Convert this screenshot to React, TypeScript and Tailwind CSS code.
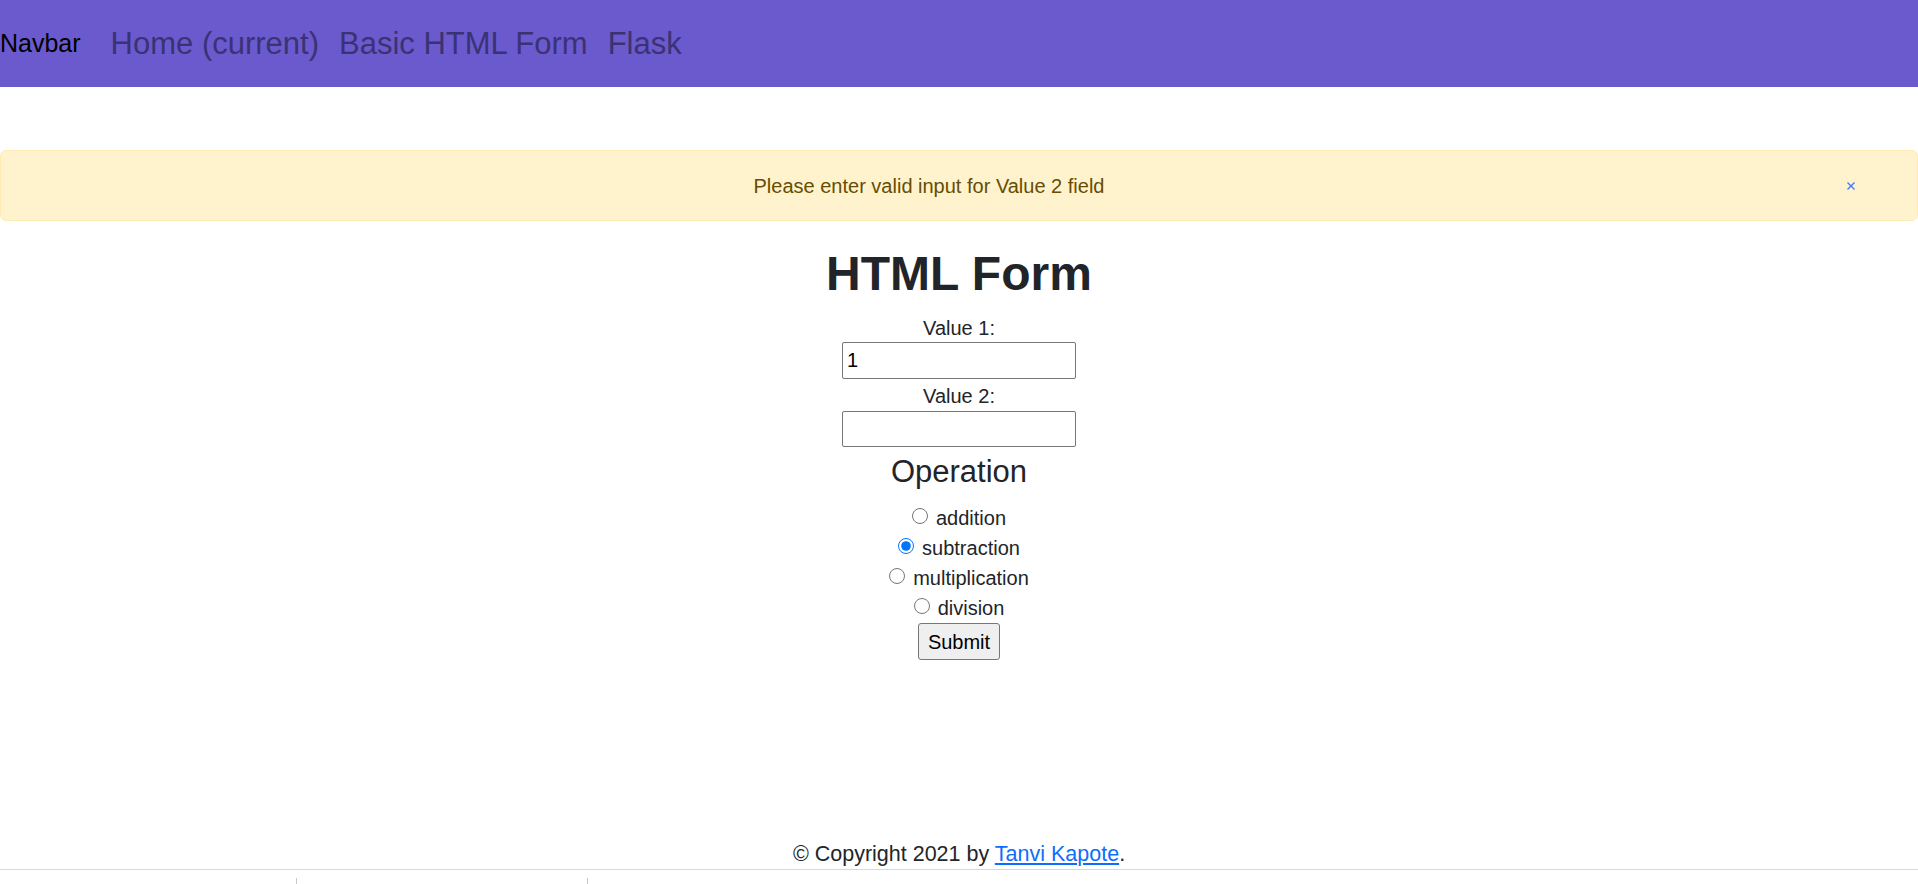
import React from 'react';

const font = { fontFamily: '"Liberation Sans", Arial, sans-serif' };

function Navbar() {
  return (
    <nav className="flex h-[87px] items-center bg-[#6a5acd]">
      <span className="text-[25px] leading-none text-black">Navbar</span>
      <div className="ml-[30px] flex items-center gap-[20px] text-[31px] leading-none text-[#3b3274]">
        <a href="#">Home (current)</a>
        <a href="#">Basic HTML Form</a>
        <a href="#">Flask</a>
      </div>
    </nav>
  );
}

function Alert() {
  return (
    <div className="relative mt-[63px] flex h-[71px] items-center justify-center rounded-[6px] border border-[#ffecb5] bg-[#fff3cd] pr-[60px] text-[20px] text-[#664d03]">
      <span>Please enter valid input for Value 2 field</span>
      <button className="absolute right-[62px] top-1/2 -translate-y-1/2">
        <svg width="8" height="8" viewBox="0 0 8 8">
          <path d="M0.5 0.5 L7.5 7.5 M7.5 0.5 L0.5 7.5" stroke="#3d7bff" strokeWidth="1.4" />
        </svg>
      </button>
    </div>
  );
}

const ops = ['addition', 'subtraction', 'multiplication', 'division'];

function CalcForm() {
  return (
    <form className="flex flex-col items-center text-[#212529]">
      <h1 className="mt-[23px] h-[60px] text-[48px] font-bold leading-[60px]">HTML Form</h1>
      <label className="mt-[12px] text-[20px] leading-[24px]">Value 1:</label>
      <input
        defaultValue="1"
        className="mt-[2px] h-[37px] w-[234px] rounded-[2px] border border-[#767676] px-[4px] text-[20px] text-black outline-none"
      />
      <label className="mt-[5px] text-[20px] leading-[24px]">Value 2:</label>
      <input className="mt-[3px] h-[36px] w-[234px] rounded-[2px] border border-[#767676] px-[4px] text-[20px] text-black outline-none" />
      <h3 className="mt-[5px] text-[31px] leading-[40px]">Operation</h3>
      <div className="mt-[11px] flex flex-col items-center">
        {ops.map((op) => (
          <label key={op} className="flex h-[30px] items-center gap-[8px] text-[20px]">
            <input
              type="radio"
              name="op"
              defaultChecked={op === 'subtraction'}
              className="m-0 h-[16px] w-[16px] -translate-y-[2px]"
            />
            <span>{op}</span>
          </label>
        ))}
      </div>
      <button
        type="button"
        className="h-[37px] w-[82px] rounded-[3px] border border-[#767676] bg-[#efefef] text-[20px] text-black"
      >
        Submit
      </button>
    </form>
  );
}

export default function App() {
  return (
    <div className="flex h-[884px] flex-col overflow-hidden bg-white" style={font}>
      <Navbar />
      <Alert />
      <main className="flex-1">
        <CalcForm />
      </main>
      <footer className="h-[24px] text-center text-[21.5px] leading-[24px] text-[#212529]">
        © Copyright 2021 by{' '}
        <a href="#" className="text-[#0d6efd] underline">
          Tanvi Kapote
        </a>
        .
      </footer>
      <div className="mt-[3px] flex h-[15px] border-t border-[#d9d9d9]">
        <div className="ml-[296px] mt-[8px] h-[7px] w-px bg-[#c8c8c8]" />
        <div className="ml-[290px] mt-[8px] h-[7px] w-px bg-[#c8c8c8]" />
      </div>
    </div>
  );
}
